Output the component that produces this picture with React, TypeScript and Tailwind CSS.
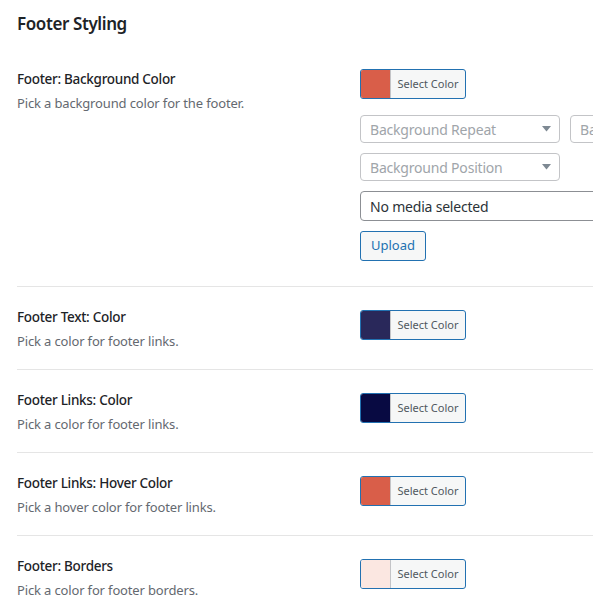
import { ReactNode } from 'react';

interface ColorRow {
  label: string;
  description: string;
  color: string;
}

const rows: ColorRow[] = [
  { label: 'Footer Text: Color', description: 'Pick a color for footer links.', color: '#29285a' },
  { label: 'Footer Links: Color', description: 'Pick a color for footer links.', color: '#080a42' },
  { label: 'Footer Links: Hover Color', description: 'Pick a hover color for footer links.', color: '#d95e49' },
  { label: 'Footer: Borders', description: 'Pick a color for footer borders.', color: '#fbe7e1' },
];

function ColorButton({ color }: { color: string }) {
  return (
    <button className="flex h-[30px] w-[106px] overflow-hidden rounded-[3px] border border-[#2271b1] bg-[#f6f7f7]">
      <span className="h-full w-[30px] shrink-0 border-r border-[#c3c4c7]" style={{ backgroundColor: color }} />
      <span className="flex h-full flex-1 items-center justify-center text-[11px] text-[#50575e]">Select Color</span>
    </button>
  );
}

function FakeSelect({ placeholder }: { placeholder: string }) {
  return (
    <div className="flex h-[28px] w-[200px] shrink-0 items-center justify-between rounded-[4px] border border-[#c3c4c7] pl-[9px] pr-[8px] text-[14px] tracking-[-0.2px] text-[#a0a5aa]">
      <span className="whitespace-nowrap">{placeholder}</span>
      <svg width="9" height="6" viewBox="0 0 9 6">
        <path d="M0 0h9L4.5 5.5z" fill="#7e8993" />
      </svg>
    </div>
  );
}

function Row({ label, description, children, first }: { label: string; description: string; children: ReactNode; first?: boolean }) {
  return (
    <div className={first ? 'flex' : 'flex border-t border-[#e5e5e5]'}>
      <div className={first ? 'w-[343px] shrink-0 pt-[25px]' : 'w-[343px] shrink-0 pt-[21px]'}>
        <div className="text-[13.5px] font-medium leading-[18px] tracking-[-0.3px] text-[#1d2327]">{label}</div>
        <div className="mt-[6px] text-[13px] leading-[18px] tracking-[-0.15px] text-[#646970]">{description}</div>
      </div>
      <div className={first ? 'flex flex-col pt-[24px] pb-[25px]' : 'flex flex-col pt-[23px] pb-[29px]'}>{children}</div>
    </div>
  );
}

export default function App() {
  return (
    <div
      className="h-[609px] w-[593px] overflow-hidden bg-white pl-[17px]"
      style={{ fontFamily: '"Noto Sans", "Open Sans", sans-serif' }}
    >
      <h2 className="pt-[13px] text-[17px] font-semibold leading-[22px] tracking-[-0.4px] text-[#1d2327]">Footer Styling</h2>
      <div className="mt-[10px]">
        <Row label="Footer: Background Color" description="Pick a background color for the footer." first>
          <ColorButton color="#d95e49" />
          <div className="mt-[16px] flex gap-[10px]">
            <FakeSelect placeholder="Background Repeat" />
            <FakeSelect placeholder="Background Attachment" />
          </div>
          <div className="mt-[10px] flex">
            <FakeSelect placeholder="Background Position" />
          </div>
          <div className="mt-[10px] flex h-[30px] w-[420px] items-center rounded-[4px] border border-[#8c8f94] px-[9px] text-[14px] tracking-[-0.2px] text-[#2c3338]">
            No media selected
          </div>
          <div className="mt-[10px]">
            <button className="h-[30px] rounded-[3px] border border-[#2271b1] bg-[#f6f7f7] px-[10px] text-[13px] text-[#2271b1]">
              Upload
            </button>
          </div>
        </Row>
        {rows.map((r) => (
          <Row key={r.label} label={r.label} description={r.description}>
            <ColorButton color={r.color} />
          </Row>
        ))}
      </div>
    </div>
  );
}
